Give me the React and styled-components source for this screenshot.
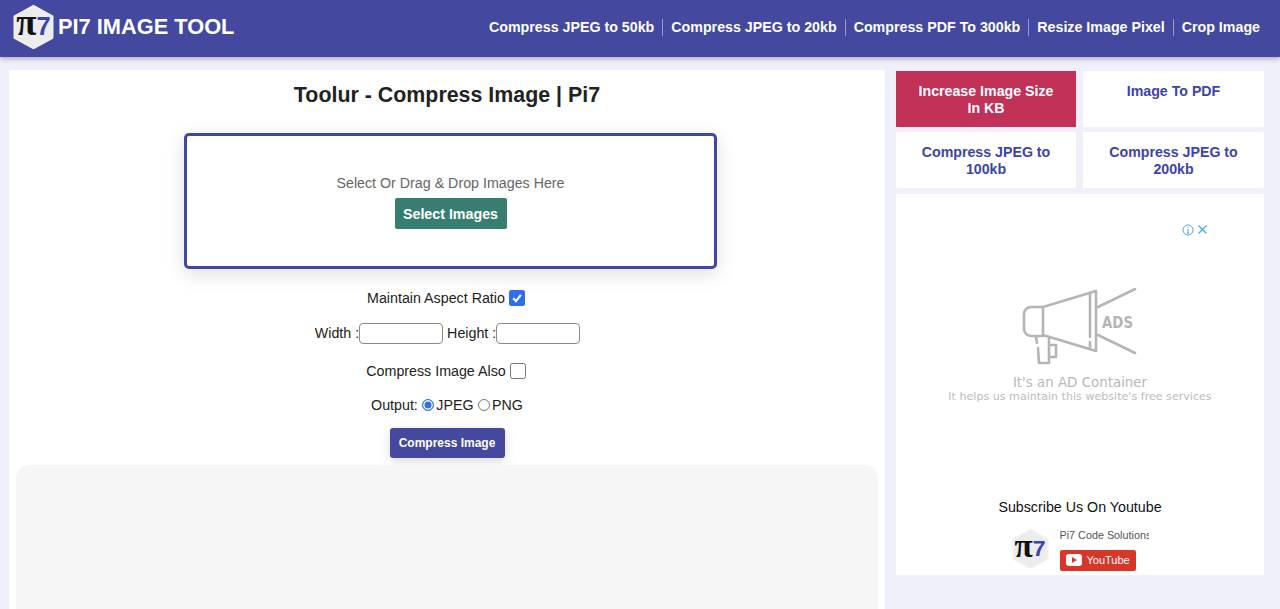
import React from "react";
import styled, { createGlobalStyle } from "styled-components";

const Global = createGlobalStyle`
  html, body { margin: 0; padding: 0; height: 609px; overflow: hidden; background: #f0f0fb; }
  body { font-family: "Liberation Sans", Arial, sans-serif; color: #222; }
  * { box-sizing: border-box; }
`;

const Header = styled.header`
  height: 57px;
  background: #44489f;
  display: flex;
  align-items: center;
  justify-content: space-between;
  padding: 0 12px 3px 13px;
  box-shadow: 0 2px 5px rgba(40, 40, 90, 0.35);
  position: relative;
`;
const Brand = styled.div`
  display: flex;
  align-items: center;
  gap: 4px;
`;
const BrandName = styled.div`
  color: #fff;
  font-size: 21.8px;
  font-weight: 700;
  margin-top: 1px;
  white-space: nowrap;
`;
const Nav = styled.nav`
  display: flex;
  align-items: center;
  margin-top: 1px;
`;
const NavLink = styled.a`
  color: #fff;
  font-size: 14.24px;
  font-weight: 700;
  line-height: 17px;
  padding: 0 8px;
  white-space: nowrap;
  border-left: ${(p) => (p.$first ? "none" : "1px solid rgba(255,255,255,.45)")};
`;
const Body = styled.div`
  display: flex;
  align-items: flex-start;
  padding: 13px 16px 0 9px;
  height: 552px;
  overflow: hidden;
`;
const Main = styled.main`
  width: 876px;
  height: 560px;
  flex: none;
  background: #fff;
  padding: 0 7px;
  display: flex;
  flex-direction: column;
  align-items: center;
`;
const Title = styled.h1`
  margin: 12px 0 0;
  font-size: 21.4px;
  line-height: 27px;
  font-weight: 700;
  color: #222;
`;
const Drop = styled.div`
  width: 533px;
  height: 136px;
  margin: 24px 0 0 7px;
  border: 3.5px solid #4246a3;
  border-radius: 5px;
  box-shadow: 0 5px 20px rgba(0, 0, 0, 0.13);
  display: flex;
  flex-direction: column;
  align-items: center;
  padding-top: 38px;
`;
const DropText = styled.div`
  font-size: 14.25px;
  line-height: 18px;
  color: #666;
`;
const SelectButton = styled.button`
  margin-top: 6px;
  width: 112px;
  height: 31px;
  border: none;
  border-radius: 2px;
  background: #377e71;
  color: #fff;
  font: 700 14.25px "Liberation Sans", sans-serif;
`;
const Row = styled.div`
  display: flex;
  align-items: center;
  justify-content: center;
  font-size: 14.25px;
  line-height: 18px;
  color: #222;
  height: 20px;
  margin-top: ${(p) => p.$top}px;
  margin-left: ${(p) => p.$left || 0}px;
  white-space: pre;
`;
const Check = styled.span`
  width: 16px;
  height: 16px;
  margin-left: 4px;
  border-radius: 2.5px;
  display: inline-flex;
  align-items: center;
  justify-content: center;
  background: ${(p) => (p.$on ? "#2f6fed" : "#fff")};
  border: ${(p) => (p.$on ? "none" : "1px solid #767676")};
`;
const SizeInput = styled.span`
  width: 84px;
  height: 21px;
  border: 1px solid #8a8a8a;
  border-radius: 4px;
  background: #fff;
`;
const Radio = styled.span`
  width: 12.5px;
  height: 12.5px;
  border-radius: 50%;
  margin: 0 2px 0 4px;
  display: inline-block;
  border: ${(p) => (p.$on ? "1.5px solid #2f6fed" : "1px solid #767676")};
  box-shadow: ${(p) => (p.$on ? "inset 0 0 0 1.5px #fff" : "none")};
  background: ${(p) => (p.$on ? "#2f6fed" : "#fff")};
`;
const CompressButton = styled.button`
  margin: 13px 0 0 0;
  width: 115px;
  height: 30px;
  border: none;
  border-radius: 3px;
  background: #44489f;
  color: #fff;
  font: 700 12px "Liberation Sans", sans-serif;
  box-shadow: 0 4px 12px rgba(0, 0, 0, 0.14);
`;
const Results = styled.div`
  align-self: stretch;
  flex: 1;
  margin-top: 7px;
  background: #f6f6f6;
  border-radius: 14px 14px 0 0;
`;
const Side = styled.aside`
  width: 368px;
  margin-left: 11px;
  flex: none;
  display: flex;
  flex-direction: column;
`;
const Tiles = styled.div`
  display: grid;
  grid-template-columns: 180px 181px;
  grid-auto-rows: 55.5px;
  column-gap: 7px;
  row-gap: 5.5px;
  margin-top: 1px;
`;
const Tile = styled.a`
  background: ${(p) => (p.$hot ? "#c13158" : "#fff")};
  color: ${(p) => (p.$hot ? "#fff" : "#3c44ab")};
  font-size: 14.2px;
  font-weight: 700;
  line-height: 16.5px;
  text-align: center;
  padding: 12px 18px 0;
`;
const AdPanel = styled.div`
  margin-top: 6px;
  height: 381px;
  background: #fff;
  position: relative;
  display: flex;
  flex-direction: column;
  align-items: center;
`;
const AdMarks = styled.div`
  position: absolute;
  top: 30px;
  right: 56px;
  display: flex;
  gap: 3px;
  align-items: center;
`;
const AdArt = styled.svg`
  display: block;
  margin: 94px 0 0 3px;
`;
const AdTitle = styled.div`
  font-family: "DejaVu Sans", sans-serif;
  font-size: 13.4px;
  line-height: 15px;
  color: #b8b8b8;
  margin-top: 8px;
`;
const AdSub = styled.div`
  font-family: "DejaVu Sans", sans-serif;
  font-size: 11.1px;
  line-height: 13px;
  color: #bcbcbc;
  white-space: nowrap;
`;
const SubHeading = styled.div`
  font-size: 14.25px;
  line-height: 18px;
  color: #111;
  margin-top: 95px;
`;
const Channel = styled.div`
  display: flex;
  gap: 11px;
  margin: 13px 0 0 0;
  align-self: center;
  width: 137px;
`;
const ChannelInfo = styled.div`
  display: flex;
  flex-direction: column;
  width: 89px;
  overflow: hidden;
`;
const ChannelName = styled.div`
  font-size: 10.8px;
  line-height: 13px;
  color: #555;
  white-space: nowrap;
  overflow: hidden;
`;
const YouTube = styled.div`
  margin-top: 8px;
  width: 76px;
  height: 21px;
  border-radius: 2px;
  background: #d9362a;
  color: #fff;
  font-size: 11px;
  display: flex;
  align-items: center;
  gap: 5px;
  padding-left: 6px;
`;
const LogoBox = styled.div`
  position: relative;
  flex: none;
  width: ${(p) => p.$w}px;
  height: ${(p) => p.$w * 1.08}px;
  svg {
    display: block;
  }
`;
const LogoGlyphs = styled.div`
  position: absolute;
  inset: 0;
  display: flex;
  align-items: center;
  justify-content: center;
  line-height: 1;
  white-space: nowrap;
`;
const Pi = styled.span`
  font-family: "Liberation Serif", serif;
  font-weight: 700;
  font-size: ${(p) => p.$w * 0.9}px;
  color: #111;
  transform: translateY(-${(p) => p.$w * 0.09}px);
`;
const Seven = styled.span`
  font-family: "Liberation Sans", sans-serif;
  font-weight: 700;
  font-size: ${(p) => p.$w * 0.62}px;
  color: #3c44ab;
`;

function Logo({ width }) {
  return (
    <LogoBox $w={width}>
      <svg width={width} height={width * 1.08} viewBox="0 0 41 44.3">
        <polygon points="20.5,1 39.5,11.5 39.5,33 20.5,43.3 1.5,33 1.5,11.5" fill="#ececec" stroke="#f0f0f0" strokeLinejoin="round" strokeWidth="2" />
      </svg>
      <LogoGlyphs>
        <Pi $w={width}>π</Pi>
        <Seven $w={width}>7</Seven>
      </LogoGlyphs>
    </LogoBox>
  );
}

export default function App() {
  return (
    <>
      <Global />
      <Header>
        <Brand>
          <Logo width={41} />
          <BrandName>PI7 IMAGE TOOL</BrandName>
        </Brand>
        <Nav>
          <NavLink $first>Compress JPEG to 50kb</NavLink>
          <NavLink>Compress JPEG to 20kb</NavLink>
          <NavLink>Compress PDF To 300kb</NavLink>
          <NavLink>Resize Image Pixel</NavLink>
          <NavLink>Crop Image</NavLink>
        </Nav>
      </Header>
      <Body>
        <Main>
          <Title>Toolur - Compress Image | Pi7</Title>
          <Drop>
            <DropText>Select Or Drag &amp; Drop Images Here</DropText>
            <SelectButton>Select Images</SelectButton>
          </Drop>
          <Row $top={19} $left={-2}>
            Maintain Aspect Ratio
            <Check $on>
              <svg width="12" height="12" viewBox="0 0 12 12">
                <path d="M2.2 6.3 5 9.2 9.9 2.9" fill="none" stroke="#fff" strokeWidth="2" />
              </svg>
            </Check>
          </Row>
          <Row $top={15} $left={1}>
            Width :<SizeInput /> Height :<SizeInput />
          </Row>
          <Row $top={18} $left={-2}>
            Compress Image Also
            <Check />
          </Row>
          <Row $top={14}>
            Output:<Radio $on />JPEG<Radio />PNG
          </Row>
          <CompressButton>Compress Image</CompressButton>
          <Results />
        </Main>
        <Side>
          <Tiles>
            <Tile $hot>Increase Image Size In KB</Tile>
            <Tile>Image To PDF</Tile>
            <Tile>Compress JPEG to 100kb</Tile>
            <Tile>Compress JPEG to 200kb</Tile>
          </Tiles>
          <AdPanel>
            <AdMarks>
              <svg width="12" height="12" viewBox="0 0 12 12">
                <circle cx="6" cy="6" r="5" fill="none" stroke="#4aa8d8" strokeWidth="1" />
                <path d="M6 5v4M6 3v1.2M5 9h2" stroke="#4aa8d8" strokeWidth="1" fill="none" />
              </svg>
              <svg width="11" height="11" viewBox="0 0 11 11">
                <path d="M1.5 1.5l8 8M9.5 1.5l-8 8" stroke="#4aa8d8" strokeWidth="1.2" />
              </svg>
            </AdMarks>
            <AdArt width="119" height="79" viewBox="0 0 119 79" fill="none" stroke="#b5b5b5" strokeWidth="2.6" strokeLinejoin="round" strokeLinecap="round">
              <path d="M21 19H9a7 7 0 0 0-7 7v15a7 7 0 0 0 7 7h12z" />
              <path d="M21 19 74 3v60L21 47" />
              <path d="M68 6v43M68 54v6" />
              <path d="M76 19 113 1" />
              <path d="M76 47 113 65" />
              <path d="M14 49l1 6M16 60l1 15h10V50" />
              <path d="M27 57h7v12h-7" />
              <text x="80" y="40" stroke="none" fill="#b5b5b5" fontFamily="'DejaVu Sans', sans-serif" fontSize="16.5" fontWeight="700" textLength="31" lengthAdjust="spacingAndGlyphs">ADS</text>
            </AdArt>
            <AdTitle>It's an AD Container</AdTitle>
            <AdSub>It helps us maintain this website's free services</AdSub>
            <SubHeading>Subscribe Us On Youtube</SubHeading>
            <Channel>
              <Logo width={37} />
              <ChannelInfo>
                <ChannelName>Pi7 Code Solutions</ChannelName>
                <YouTube>
                  <svg width="16" height="12" viewBox="0 0 16 12">
                    <rect width="16" height="12" rx="3" fill="#fff" />
                    <path d="M6 3l5 3-5 3z" fill="#d9362a" />
                  </svg>
                  YouTube
                </YouTube>
              </ChannelInfo>
            </Channel>
          </AdPanel>
        </Side>
      </Body>
    </>
  );
}
